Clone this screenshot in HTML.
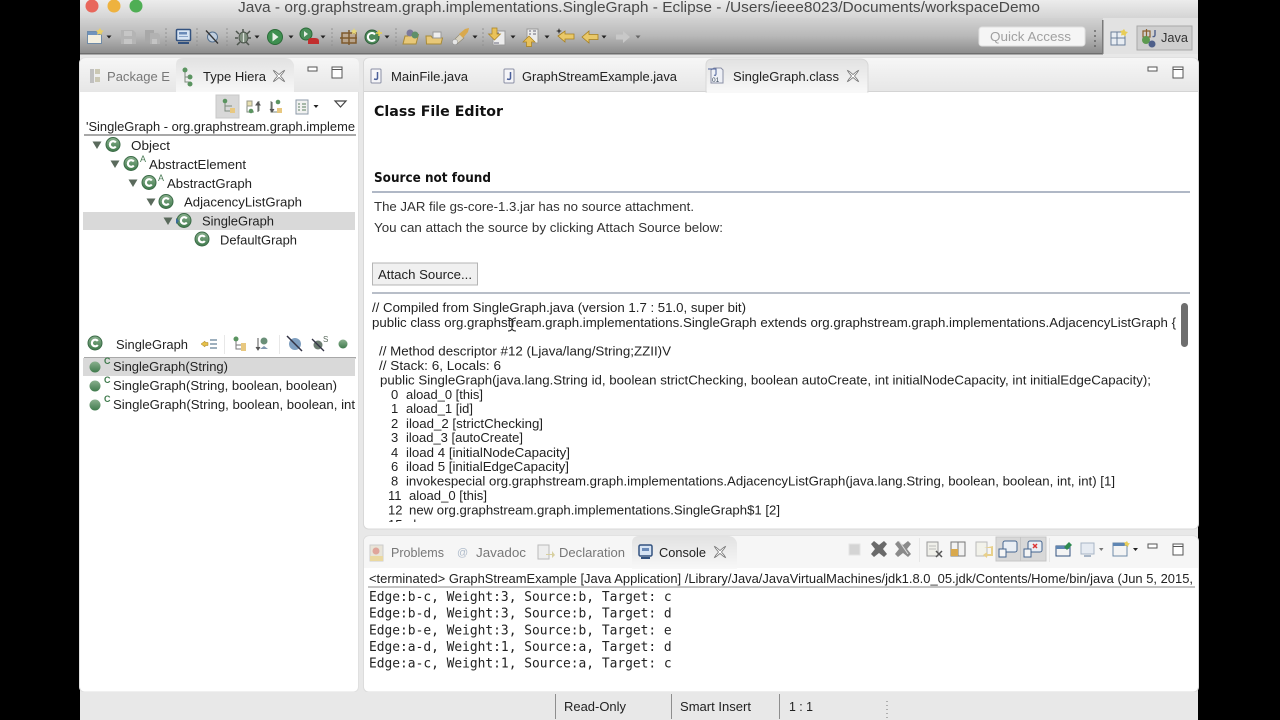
<!DOCTYPE html>
<html><head><meta charset="utf-8"><title>Eclipse</title>
<style>
html,body{margin:0;padding:0;background:#000;width:1280px;height:720px;overflow:hidden}
svg{display:block;filter:blur(.35px)}
text{font-family:"Liberation Sans",sans-serif;font-size:13px;fill:#222;white-space:pre}
.g{fill:#777}
.m{font-family:"DejaVu Sans Mono",monospace;font-size:12.9px;fill:#222}
.h{font-family:"DejaVu Sans",sans-serif;font-weight:bold;fill:#111}
</style></head><body>
<svg width="1280" height="720" viewBox="0 0 1280 720" xmlns="http://www.w3.org/2000/svg">
<defs>
<linearGradient id="t" x1="0" y1="0" x2="0" y2="1"><stop offset="0" stop-color="#ececec"/><stop offset="1" stop-color="#d4d4d4"/></linearGradient>
<linearGradient id="b" x1="0" y1="0" x2="0" y2="1"><stop offset="0" stop-color="#d2d2d2"/><stop offset=".5" stop-color="#b8b8b8"/><stop offset="1" stop-color="#8a8a8a"/></linearGradient>
<linearGradient id="tab" x1="0" y1="0" x2="0" y2="1"><stop offset="0" stop-color="#f6f6f6"/><stop offset="1" stop-color="#e6e6e6"/></linearGradient>
<linearGradient id="act" x1="0" y1="0" x2="0" y2="1"><stop offset="0" stop-color="#e2e2e2"/><stop offset="1" stop-color="#f8f8f8"/></linearGradient>
<linearGradient id="go" x1="0" y1="0" x2="0" y2="1"><stop offset="0" stop-color="#8ab08e"/><stop offset="1" stop-color="#3f7a4c"/></linearGradient>
<clipPath id="ed"><rect x="366" y="296" width="830" height="226"/></clipPath>
<g id="C"><circle cx="0" cy="0" r="7" fill="url(#go)" stroke="#3b6b47"/><path d="M2.800-2A3.300 3.300 0 1 0 2.800 2" fill="none" stroke="#fff" stroke-width="2.200"/></g>
<g id="M"><circle r="5.500" fill="url(#go)"/></g>
<path id="arr" d="M-4.500-3.500H4.500L0 4Z" fill="#5a6a5c"/>
<g id="X"><path d="M-5.500-5.500C-3-4.500-1-2 0-1.500 1-2 3-4.500 5.500-5.500 4.500-3 2-1 1.500 0 2 1 4.500 3 5.500 5.500 3 4.500 1 2 0 1.500-1 2-3 4.500-5.500 5.500-4.500 3-2 1-1.500 0-2-1-4.500-3-5.500-5.500Z" fill="#fff" stroke="#777" stroke-width=".8"/></g>
<g id="min"><rect x="0" y="0" width="9" height="4" fill="#fff" stroke="#555"/></g>
<g id="max"><rect x="0" y="0" width="10" height="11" fill="#fff" stroke="#555"/><path d="M0 2.500H10" stroke="#555"/></g>
<g id="J"><rect x="-5" y="-7" width="10" height="14" rx="1" fill="#f5f5f8" stroke="#8a8fa5"/><path d="M1.500-4V2Q1.500 4-2 3" fill="none" stroke="#4a5f9a" stroke-width="1.500"/></g>
<path id="dn" d="M0 0h5l-2.500 3z" fill="#222"/>
<g id="dots" fill="#8f8f8f"><circle cy="29" r=".8"/><circle cy="33" r=".8"/><circle cy="37" r=".8"/><circle cy="41" r=".8"/><circle cy="45" r=".8"/></g>
</defs>

<rect x="80" y="0" width="1118" height="720" fill="#e8e8e8"/>
<rect x="80" y="0" width="1118" height="18" fill="url(#t)"/>
<circle cx="92" cy="6" r="6.500" fill="#e8675c"/><circle cx="114" cy="6" r="6.500" fill="#eeb23f"/><circle cx="136" cy="6" r="6.500" fill="#4fae54"/>
<text x="238" y="12" textLength="802" lengthAdjust="spacingAndGlyphs" style="font-size:14.400px;fill:#4a4a4a">Java - org.graphstream.graph.implementations.SingleGraph - Eclipse - /Users/ieee8023/Documents/workspaceDemo</text>

<rect x="80" y="18" width="1023" height="36" fill="url(#b)"/>
<rect x="1103" y="18" width="95" height="36" fill="#e2e2e2"/>
<rect x="80" y="53" width="1023" height="1.500" fill="#6e6e6e"/>
<!-- toolbar -->
<g>
<rect x="87.500" y="31.500" width="14" height="12" fill="#f3efe0" stroke="#6f8ba8"/><rect x="88" y="32" width="13" height="3" fill="#6f93bd"/><path d="M100 28l1.300 2.200 2.500.5-1.800 1.800-.4 2.500-2.300-1.200-2.300 1 .5-2.500-1.600-1.700 2.500-.5z" fill="#e8cf6a"/>
<use href="#dn" x="106.500" y="35.500"/>
<path d="M121 30h12l3 3v11h-15z" fill="#b4b4b4"/><rect x="124" y="31" width="8" height="5" fill="#c6c6c6"/><rect x="124" y="39" width="8" height="5" fill="#c6c6c6"/>
<path d="M145 30h9v12h-9z" fill="#a8a8a8"/><path d="M150 33h8l2 2v9h-10z" fill="#b2b2b2"/><rect x="152" y="39" width="5" height="5" fill="#c4c4c4"/>
<use href="#dots" x="166"/>
<rect x="176.500" y="29.500" width="14" height="11" rx="1" fill="#d7e4f4" stroke="#33527f" stroke-width="1.500"/><rect x="179" y="32" width="8" height="2.500" fill="#6a8ab8"/><rect x="179" y="36" width="9" height="1" fill="#8aa4c8"/><rect x="178" y="42" width="11" height="2" fill="#33527f"/>
<use href="#dots" x="197"/>
<circle cx="212.500" cy="37" r="5" fill="#c0cede" stroke="#54708f"/><path d="M206 30.500l12 13" stroke="#333" stroke-width="1.300"/>
<use href="#dots" x="227"/>
<path d="M243 29v3M236 31l3 3M250 31l-3 3M235 38h3M251 38h-3M237 45l3-3M249 45l-3-3" stroke="#4d554d" stroke-width="1.500"/><ellipse cx="243.500" cy="37.500" rx="4.500" ry="5.500" fill="#7e8f7e" stroke="#4d554d"/><path d="M243.500 33v9" stroke="#d8ded8" stroke-width="1.300"/>
<use href="#dn" x="254.500" y="35.500"/>
<circle cx="275" cy="37" r="7.500" fill="#3e8f50" stroke="#2b6b38"/><path d="M272.500 32.500l6 4.500-6 4.500z" fill="#e8f0e8"/>
<use href="#dn" x="288.500" y="35.500"/>
<circle cx="306" cy="34" r="6" fill="#4a8f5a" stroke="#2b6b38"/><path d="M304 31l4 3-4 3z" fill="#e8f0e8"/><path d="M308 41q0-3 3-3h4q4 0 4 3v3h-11z" fill="#c22e2e"/>
<use href="#dn" x="320.500" y="35.500"/>
<use href="#dots" x="332"/>
<path d="M342 33h14v10h-14zM349 30v15M340 38h17" fill="#c49b6b" fill-opacity=".5" stroke="#7e5a2c" stroke-width="1.500"/><path d="M354 28l1 2.200 2.300.4-1.600 1.600.3 2.300-2-1.200-2 1.200.4-2.300-1.600-1.600 2.200-.4z" fill="#e8d878"/>
<circle cx="372" cy="37" r="7" fill="#4f8a5b" stroke="#2e5e3a"/><path d="M375 34.500a4 4 0 1 0 0 5" fill="none" stroke="#fff" stroke-width="2"/><path d="M379 30v6M376 33h6" stroke="#e8d050" stroke-width="1.500"/>
<use href="#dn" x="384.500" y="35.500"/>
<use href="#dots" x="396"/>
<path d="M405 36h3l1.500-1.500h9l-2.500 9.500h-13z" fill="#e8c878" stroke="#a88a38"/><circle cx="410" cy="33" r="3.500" fill="#7c7a9c"/><circle cx="415" cy="35" r="3.500" fill="#5f8f6a"/>
<path d="M426 36h5l1.500 2h10l-1.500 6h-14.500z" fill="#e8c878" stroke="#a88a38"/><rect x="433" y="32" width="8" height="6" fill="#eee" stroke="#999"/>
<path d="M453 41l7-7 4 4-7 6z" fill="#d8d2c0" stroke="#8a8470" stroke-width=".6"/><path d="M459 34l6-5 4-1-1 4-5 6z" fill="#d9a94d"/><circle cx="455" cy="42" r="2.700" fill="#e6e6e6" stroke="#888" stroke-width=".5"/>
<use href="#dn" x="472.500" y="35.500"/>
<use href="#dots" x="483"/>
<rect x="493" y="31" width="12" height="14" fill="#ececec" stroke="#9a9a9a"/><path d="M494 33h5M494 43h5" stroke="#667"/><path d="M492 28h5v6h3.500l-6 6-6-6h3.500z" fill="#e9c25a" stroke="#a8801e" stroke-width=".7"/>
<use href="#dn" x="510.500" y="35.500"/>
<rect x="527" y="29" width="11" height="14" fill="#ececec" stroke="#9a9a9a"/><path d="M529 31h2M533 31h3M529 34h2M533 34h3" stroke="#667"/><path d="M529 36l6 6h-3.500v4.500h-5V42H523z" fill="#e9c25a" stroke="#a8801e" stroke-width=".7"/>
<use href="#dn" x="544.500" y="35.500"/>
<path d="M558 36l7-5v3h9v5h-9v3z" fill="#e9c868" stroke="#a8801e" stroke-width=".8" transform="translate(0 0)"/><path d="M559 28l.8 2.200 2.200.8-2.200.8-.8 2.200-.8-2.200-2.200-.8 2.200-.8z" fill="#333"/>
<path d="M582 37l7-6v3.500h9v5h-9v3.500z" fill="#e9c868" stroke="#a8801e" stroke-width=".8"/>
<use href="#dn" x="601.500" y="35.500"/>
<path d="M630 37l-7-6v3.500h-7v5h7v3.500z" fill="#c8c8c8"/>
<path d="M635.500 35.500h5l-2.500 3z" fill="#666"/>
</g>
<rect x="979" y="27" width="106" height="19" rx="3" fill="#f5f5f5" stroke="#e0e0e0"/>
<text x="990" y="41" textLength="81" lengthAdjust="spacingAndGlyphs" style="fill:#a0a0a0">Quick Access</text>
<path d="M1095 30v2M1095 35v2M1095 40v2M1095 45v2" stroke="#555" stroke-width="1.200"/>
<rect x="1102" y="20" width="1.500" height="34" fill="#7a7a7a"/>
<rect x="1111" y="32" width="14" height="13" fill="#e8edf3" stroke="#6b7f99"/><path d="M1111 38h14M1117 32v13" stroke="#6b7f99"/><path d="M1124 29l1.500 2.500 2.500.5-2 2-.5 2.500-2-1.500-2.500.5.500-2.500-1.500-2 2.500-.5z" fill="#e8cd58"/>
<rect x="1137" y="26" width="55" height="24" fill="#cfcfcf" stroke="#a8a8a8"/>
<path d="M1143 31h7v6h-7zM1146.500 29v10" fill="none" stroke="#8a5f2e" stroke-width="1.200"/><circle cx="1146" cy="40" r="4" fill="#5d9a50"/><circle cx="1152" cy="44" r="3.500" fill="#4e5f8a"/>
<path d="M1155 30v5q0 2-2.500 1.500" fill="none" stroke="#4e5f8a" stroke-width="1.400"/>
<text x="1161" y="42" textLength="27" lengthAdjust="spacingAndGlyphs" style="fill:#333">Java</text>

<!-- left panel -->
<rect x="79.500" y="58" width="279" height="634" rx="5" fill="#fff" stroke="#e0e0e0"/>
<path d="M80 92V64q0-6 6-6h267q6 0 6 6v28z" fill="url(#tab)"/>
<path d="M176 92V65q0-7 7-7h102q7 0 9 7v27z" fill="url(#act)"/>
<rect x="90" y="69" width="4" height="14" fill="#c0c0c0"/><rect x="95" y="69" width="5" height="5" fill="#cbc8b4"/><rect x="95" y="77" width="5" height="5" fill="#cbc8b4"/>
<text x="107" y="81" textLength="63" lengthAdjust="spacingAndGlyphs" class="g">Package E</text>
<circle cx="185" cy="70" r="2.500" fill="#5a9460"/><circle cx="190" cy="77" r="2.500" fill="#5a9460"/><circle cx="190" cy="84" r="2.500" fill="#5a9460"/><path d="M185 72v10h4M185 77h4" fill="none" stroke="#7c8a7c"/>
<text x="203" y="81" textLength="63" lengthAdjust="spacingAndGlyphs">Type Hiera</text>
<use href="#X" x="279" y="76"/>
<use href="#min" x="308" y="67"/><use href="#max" x="332" y="67"/>
<rect x="216" y="95" width="23" height="23" fill="#d8d8d8" stroke="#c8c8c8"/>
<g fill="none" stroke="#7c8a7c"><path d="M225 101v10h7M225 106h7"/><path d="M247 102v10h7M259 111v-10"/><path d="M271 101v11h7"/></g>
<circle cx="225" cy="101" r="2.300" fill="#5a9460"/><rect x="230" y="108" width="5" height="5" fill="#e8c880"/><rect x="247" y="101" width="5" height="5" fill="#e8e0b0" stroke="#998"/><circle cx="251" cy="111" r="2.300" fill="#5a9460"/><path d="M258 102l-2 3h4zM258 104v8" stroke="#555" fill="#555"/><path d="M272 102v9M270 109l2 3 2-3" stroke="#555" fill="#555"/><circle cx="278" cy="102" r="2.300" fill="#5a9460"/><rect x="277" y="108" width="5" height="5" fill="#e8c880"/>
<rect x="296" y="100" width="12" height="14" fill="#f1f1f1" stroke="#8c9aa8"/><path d="M298 104h2M298 107h2M298 110h2M302 104h4M302 107h4M302 110h4" stroke="#5a8060"/>
<path d="M313.500 105h5l-2.500 3z" fill="#222"/>
<path d="M335 101h11l-5.500 6z" fill="#fff" stroke="#444" stroke-width="1.200"/>
<text x="86" y="131" textLength="269" lengthAdjust="spacingAndGlyphs">'SingleGraph - org.graphstream.graph.impleme</text>
<rect x="84" y="134" width="272" height="2" fill="#a8a8a8"/>
<rect x="83" y="212" width="272" height="18" fill="#d9d9d9"/>
<use href="#arr" x="97" y="145"/><use href="#C" x="113" y="144.500"/><text x="131" y="150" textLength="39" lengthAdjust="spacingAndGlyphs">Object</text>
<use href="#arr" x="115" y="164"/><use href="#C" x="131" y="163.500"/><text x="140" y="162" style="font-size:9px;fill:#4a7a55">A</text><text x="149" y="169" textLength="97" lengthAdjust="spacingAndGlyphs">AbstractElement</text>
<use href="#arr" x="133" y="183"/><use href="#C" x="149" y="182.500"/><text x="158" y="181" style="font-size:9px;fill:#4a7a55">A</text><text x="167" y="188" textLength="85" lengthAdjust="spacingAndGlyphs">AbstractGraph</text>
<use href="#arr" x="151" y="202"/><use href="#C" x="166" y="201.500"/><text x="184" y="206.500" textLength="118" lengthAdjust="spacingAndGlyphs">AdjacencyListGraph</text>
<use href="#arr" x="168" y="221"/><use href="#C" x="184" y="220.500"/><path d="M176 218l3 3-3 3z" fill="#3a6a9a"/><text x="202" y="225.500" textLength="72" lengthAdjust="spacingAndGlyphs">SingleGraph</text>
<use href="#C" x="202" y="239"/><text x="220" y="244.500" textLength="77" lengthAdjust="spacingAndGlyphs">DefaultGraph</text>

<use href="#C" x="95" y="343"/>
<text x="116" y="349" textLength="72" lengthAdjust="spacingAndGlyphs">SingleGraph</text>
<path d="M201 344l4-3v1.500h3v3h-3v1.500z" fill="#e6c04a" stroke="#a8801e" stroke-width=".5"/><path d="M210 340h7M210 344h7M210 348h7" stroke="#7f95a8" stroke-width="1.500"/>
<circle cx="236" cy="339" r="2.500" fill="#5a9460"/><path d="M236 341v8h6M236 345h6" fill="none" stroke="#777"/><rect x="241" y="343" width="5" height="4" fill="#e8c880"/><rect x="241" y="347" width="5" height="4" fill="#e8c880"/>
<path d="M258 338v11M256 347l2 3 2-3" stroke="#555" fill="#555"/><circle cx="264" cy="341" r="3.500" fill="#6a8f78"/><path d="M264 346l4 3h-8z" fill="#7f97b0"/>
<rect x="224" y="335" width="1" height="19" fill="#e8e8e8"/><rect x="279" y="335" width="1" height="19" fill="#e8e8e8"/>
<circle cx="295" cy="344" r="6" fill="#7f9fc0"/><path d="M287 336l15 15" stroke="#334" stroke-width="1.500"/>
<circle cx="318" cy="345" r="4.500" fill="#6b7c70"/><path d="M312 339l12 12" stroke="#334" stroke-width="1.300"/><text x="323" y="342" style="font-size:8px;fill:#5a6a5c">S</text>
<circle cx="343" cy="344" r="4.500" fill="url(#go)"/>
<rect x="84" y="357" width="272" height="1.500" fill="#a8a8a8"/>
<rect x="83" y="358" width="272" height="18" fill="#d9d9d9"/>
<use href="#M" x="95" y="367"/><text x="104" y="364" style="font-size:9px;fill:#3f7a4c;font-weight:bold">C</text><text x="113" y="371" textLength="115" lengthAdjust="spacingAndGlyphs">SingleGraph(String)</text>
<use href="#M" x="95" y="386"/><text x="104" y="383" style="font-size:9px;fill:#3f7a4c;font-weight:bold">C</text><text x="113" y="390" textLength="224" lengthAdjust="spacingAndGlyphs">SingleGraph(String, boolean, boolean)</text>
<use href="#M" x="95" y="405"/><text x="104" y="402" style="font-size:9px;fill:#3f7a4c;font-weight:bold">C</text><text x="113" y="409" textLength="242" lengthAdjust="spacingAndGlyphs">SingleGraph(String, boolean, boolean, int</text>

<!-- editor -->
<rect x="363.500" y="58" width="835" height="471" rx="5" fill="#fff" stroke="#d8d8d8"/>
<path d="M364 92V64q0-6 6-6h822q6 0 6 6v28z" fill="url(#tab)"/>
<rect x="364" y="91" width="834" height="1" fill="#d4d4d4"/>
<path d="M706 92V65q0-6 7-6h147q7 0 8 6v27z" fill="url(#act)" stroke="#d8d8d8"/>
<rect x="707" y="90" width="160" height="3" fill="#f8f8f8"/>
<use href="#J" x="376" y="76"/><text x="391" y="81" textLength="77" lengthAdjust="spacingAndGlyphs">MainFile.java</text>
<use href="#J" x="509" y="76"/><text x="522" y="81" textLength="155" lengthAdjust="spacingAndGlyphs">GraphStreamExample.java</text>
<path d="M711 70l3-2h7l2 2v13h-12z" fill="#eef0f6" stroke="#8a8fa5"/><path d="M708 69h8v5q0 2-2 1" fill="none" stroke="#4a5f9a"/><text x="712" y="82" style="font-size:6.500px;fill:#345">01</text>
<text x="733" y="81" textLength="106" lengthAdjust="spacingAndGlyphs">SingleGraph.class</text>
<use href="#X" x="853" y="76"/>
<use href="#min" x="1148" y="67"/><use href="#max" x="1173" y="67"/>

<text x="374" y="116" class="h" textLength="129" lengthAdjust="spacingAndGlyphs" style="font-size:14.500px">Class File Editor</text>
<text x="374" y="182" class="h" textLength="117" lengthAdjust="spacingAndGlyphs" style="font-size:13px">Source not found</text>
<rect x="372" y="191" width="818" height="2" fill="#b0b8c6"/>
<text x="374" y="211" textLength="320" lengthAdjust="spacingAndGlyphs" style="fill:#333">The JAR file gs-core-1.3.jar has no source attachment.</text>
<text x="374" y="232" textLength="349" lengthAdjust="spacingAndGlyphs" style="fill:#333">You can attach the source by clicking Attach Source below:</text>
<rect x="372.500" y="263" width="105" height="22" fill="#f0f0f0" stroke="#b4b4b4"/>
<text x="378" y="279" textLength="94" lengthAdjust="spacingAndGlyphs">Attach Source...</text>
<rect x="372" y="292" width="818" height="2" fill="#b8bec8"/>

<g clip-path="url(#ed)">
<text x="372" y="312" textLength="374" lengthAdjust="spacingAndGlyphs">// Compiled from SingleGraph.java (version 1.7 : 51.0, super bit)</text>
<text x="372" y="327" textLength="804" lengthAdjust="spacingAndGlyphs">public class org.graphstream.graph.implementations.SingleGraph extends org.graphstream.graph.implementations.AdjacencyListGraph {</text>
<text x="379" y="355.500" textLength="292" lengthAdjust="spacingAndGlyphs">// Method descriptor #12 (Ljava/lang/String;ZZII)V</text>
<text x="379" y="370" textLength="122" lengthAdjust="spacingAndGlyphs">// Stack: 6, Locals: 6</text>
<text x="380" y="384.500" textLength="771" lengthAdjust="spacingAndGlyphs">public SingleGraph(java.lang.String id, boolean strictChecking, boolean autoCreate, int initialNodeCapacity, int initialEdgeCapacity);</text>
<text x="391" y="399">0</text><text x="406" y="399" textLength="77" lengthAdjust="spacingAndGlyphs">aload_0 [this]</text>
<text x="391" y="413">1</text><text x="406" y="413" textLength="67" lengthAdjust="spacingAndGlyphs">aload_1 [id]</text>
<text x="391" y="428">2</text><text x="406" y="428" textLength="137" lengthAdjust="spacingAndGlyphs">iload_2 [strictChecking]</text>
<text x="391" y="442">3</text><text x="406" y="442" textLength="117" lengthAdjust="spacingAndGlyphs">iload_3 [autoCreate]</text>
<text x="391" y="457">4</text><text x="406" y="457" textLength="164" lengthAdjust="spacingAndGlyphs">iload 4 [initialNodeCapacity]</text>
<text x="391" y="471">6</text><text x="406" y="471" textLength="163" lengthAdjust="spacingAndGlyphs">iload 5 [initialEdgeCapacity]</text>
<text x="391" y="485.500">8</text><text x="406" y="485.500" textLength="709" lengthAdjust="spacingAndGlyphs">invokespecial org.graphstream.graph.implementations.AdjacencyListGraph(java.lang.String, boolean, boolean, int, int) [1]</text>
<text x="388" y="500">11</text><text x="409" y="500" textLength="78" lengthAdjust="spacingAndGlyphs">aload_0 [this]</text>
<text x="388" y="514.500">12</text><text x="409" y="514.500" textLength="371" lengthAdjust="spacingAndGlyphs">new org.graphstream.graph.implementations.SingleGraph$1 [2]</text>
<text x="388" y="529">15</text><text x="409" y="529">dup</text>
</g>
<rect x="1181" y="303" width="7" height="44" rx="3.500" fill="#6e6e6e"/>
<path d="M508 318q3 0 4 2 1-2 4-2M512 320v9M508 331q3 0 4-2 1 2 4 2" fill="none" stroke="#222" stroke-width="1"/>

<!-- console -->
<rect x="363.500" y="536" width="835" height="156" rx="5" fill="#fff" stroke="#dcdcdc"/>
<path d="M364 568V542q0-6 6-6h822q6 0 6 6v26z" fill="#f6f6f6"/>
<path d="M632 569V543q0-7 7-7h89q7 0 9 7v26z" fill="url(#act)"/>
<rect x="370" y="545" width="13" height="16" fill="#e8e4d8" stroke="#ccc"/><circle cx="376" cy="551" r="3.500" fill="#e0a59a"/><rect x="370" y="556" width="13" height="5" fill="#ead8a0"/>
<text x="391" y="557" textLength="53" lengthAdjust="spacingAndGlyphs" class="g">Problems</text>
<text x="457" y="556" style="font-size:11px;fill:#b0bccb">@</text>
<text x="476" y="557" textLength="50" lengthAdjust="spacingAndGlyphs" class="g">Javadoc</text>
<rect x="538" y="545" width="11" height="14" fill="#eee" stroke="#bbb"/><path d="M546 555h6v3l3-3-3-4v3h-6z" fill="#d8d0a0"/>
<text x="559" y="557" textLength="66" lengthAdjust="spacingAndGlyphs" class="g">Declaration</text>
<rect x="639" y="545" width="13" height="11" rx="1.500" fill="#d7e4f4" stroke="#33527f" stroke-width="1.500"/><rect x="642" y="548" width="7" height="3" fill="#6a8ab8"/><rect x="641" y="557" width="9" height="2" fill="#33527f"/>
<text x="659" y="557" textLength="47" lengthAdjust="spacingAndGlyphs">Console</text>
<use href="#X" x="720" y="552"/>
<rect x="849" y="544" width="11" height="11" fill="#d4d4d4" stroke="#e4e4e4"/>
<path d="M871 544l3-3 5 4 5-4 3 3-4 5 4 5-3 3-5-4-5 4-3-3 4-5z" fill="#6a6a6a"/>
<path d="M895 544l3-3 5 4 5-4 3 3-4 5 4 5-3 3-5-4-5 4-3-3 4-5z" fill="#8a8a8a"/><path d="M899 541l9 13" stroke="#ddd"/>
<rect x="919" y="538" width="1" height="24" fill="#e6e6e6"/>
<rect x="927" y="542" width="11" height="14" fill="#f0f0ea" stroke="#999"/><path d="M929 546h7M929 549h7" stroke="#bbb"/><path d="M936 551l6 6m0-6l-6 6" stroke="#555" stroke-width="1.500"/>
<rect x="951" y="542" width="14" height="14" fill="#f2f2f2" stroke="#777"/><path d="M958 542v14" stroke="#777"/><rect x="951" y="549" width="7" height="7" fill="#d9a94d"/>
<rect x="976" y="542" width="11" height="14" fill="#f2f2ea" stroke="#bbb"/><path d="M984 548h7v6h-4v-2l-4 3 4 3v-2h6v-10z" fill="#e8d08a"/>
<rect x="996" y="537" width="50" height="24" fill="#d8d8d8" stroke="#c6c6c6"/><path d="M1020.500 537v24" stroke="#c6c6c6"/>
<rect x="1003" y="541" width="14" height="11" rx="2" fill="#e9eef4" stroke="#45658f"/><rect x="999" y="549" width="7" height="8" fill="#f5f5f5" stroke="#45658f"/>
<rect x="1028" y="541" width="14" height="11" rx="2" fill="#e9eef4" stroke="#45658f"/><rect x="1024" y="549" width="7" height="8" fill="#f5f5f5" stroke="#45658f"/><path d="M1033 544l4 4m0-4l-4 4" stroke="#d33" stroke-width="1.500"/>
<rect x="1049" y="538" width="1" height="24" fill="#e6e6e6"/>
<rect x="1056" y="546" width="14" height="10" fill="#f4f4f4" stroke="#33527f"/><rect x="1056" y="546" width="14" height="3" fill="#5f86b3"/><path d="M1064 547l5-5 3 3-5 5z" fill="#2f8a50"/>
<rect x="1081" y="543" width="13" height="11" fill="#e6ebf2" stroke="#a8b5c6"/><rect x="1084" y="555" width="7" height="2" fill="#a8b5c6"/>
<path d="M1099 548h4.500l-2.200 3z" fill="#777"/>
<rect x="1113" y="543" width="14" height="13" fill="#f4f4f4" stroke="#6f8ba8"/><rect x="1113" y="543" width="14" height="3" fill="#5f86b3"/><path d="M1127 541l1 2 2 .5-1.500 1.500-.5 2-1.500-1.500-2 .5 .5-2-1-1.500 2-.5z" fill="#e8cd58"/>
<path d="M1133 548h5l-2.500 3z" fill="#222"/>
<use href="#min" x="1148" y="544"/><use href="#max" x="1173" y="544"/>

<text x="369" y="583" textLength="824" lengthAdjust="spacingAndGlyphs">&lt;terminated&gt; GraphStreamExample [Java Application] /Library/Java/JavaVirtualMachines/jdk1.8.0_05.jdk/Contents/Home/bin/java (Jun 5, 2015,</text>
<rect x="368" y="586.500" width="827" height="1" fill="#888"/>
<text x="369" y="601" class="m">Edge:b-c, Weight:3, Source:b, Target: c</text>
<text x="369" y="617.500" class="m">Edge:b-d, Weight:3, Source:b, Target: d</text>
<text x="369" y="634.500" class="m">Edge:b-e, Weight:3, Source:b, Target: e</text>
<text x="369" y="651" class="m">Edge:a-d, Weight:1, Source:a, Target: d</text>
<text x="369" y="667.500" class="m">Edge:a-c, Weight:1, Source:a, Target: c</text>

<!-- status -->
<rect x="80" y="692" width="1118" height="28" fill="#e8e8e8"/>
<rect x="555" y="694" width="1" height="25" fill="#8e8e8e"/><rect x="671" y="694" width="1" height="25" fill="#8e8e8e"/><rect x="779" y="694" width="1" height="25" fill="#8e8e8e"/>
<text x="564" y="711" textLength="62" lengthAdjust="spacingAndGlyphs">Read-Only</text>
<text x="680" y="711" textLength="71" lengthAdjust="spacingAndGlyphs">Smart Insert</text>
<text x="789" y="711" textLength="24" lengthAdjust="spacingAndGlyphs">1 : 1</text>
<path d="M887 701v1M887 705v1M887 709v1M887 713v1M887 717v1" stroke="#888" stroke-width="1.200"/>
</svg>
</body></html>
